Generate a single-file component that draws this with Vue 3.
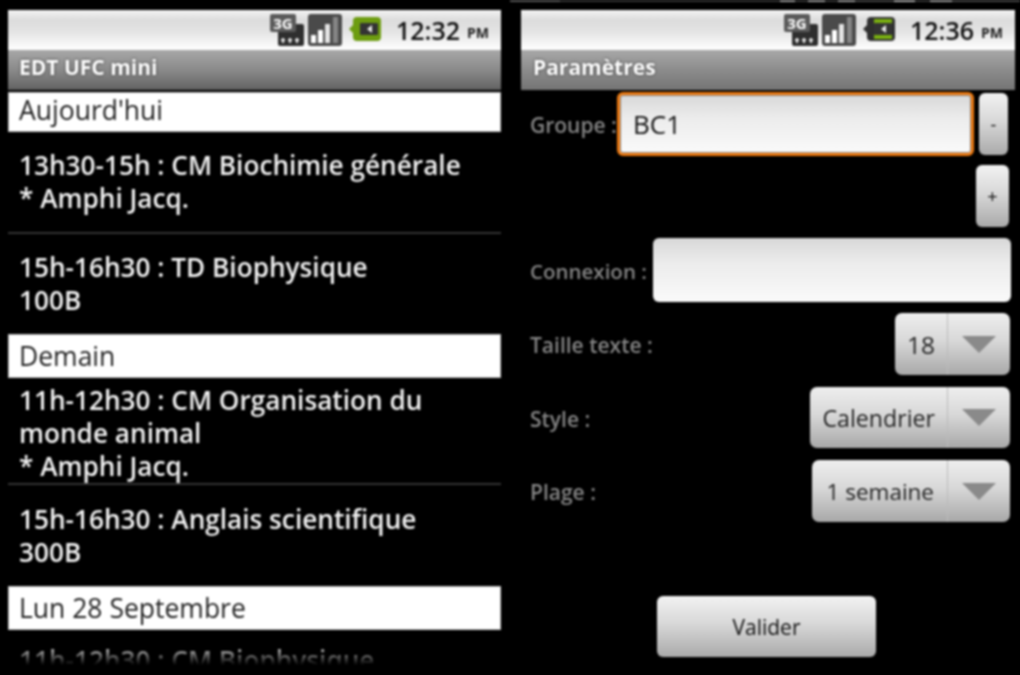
<script setup>
const groups = [
  { day: "Aujourd'hui", cls: 'first', items: [
    { lines: ['13h30-15h : CM Biochimie générale', '* Amphi Jacq.'], cls: 'c1' },
    { lines: ['15h-16h30 : TD Biophysique', '100B'], cls: 'c2' },
  ]},
  { day: 'Demain', cls: 'second', items: [
    { lines: ['11h-12h30 : CM Organisation du', 'monde animal', '* Amphi Jacq.'], cls: 'c3' },
    { lines: ['15h-16h30 : Anglais scientifique', '300B'], cls: 'c4' },
  ]},
  { day: 'Lun 28 Septembre', cls: 'third', items: [
    { lines: ['11h-12h30 : CM Biophysique'], cls: 'c5' },
  ]},
]
const spinners = [
  { label: 'Taille texte :', value: '18', cls: 's1' },
  { label: 'Style :', value: 'Calendrier', cls: 's2' },
  { label: 'Plage :', value: '1 semaine', cls: 's3' },
]
const panels = [
  { time: '12:32', title: 'EDT UFC mini', charging: true },
  { time: '12:36', title: 'Paramètres', charging: false },
]
</script>

<template>
  <main class="page">
    <section v-for="(p, i) in panels" :key="p.time" class="phone" :class="i ? 'right' : 'left'">
      <div v-if="i" class="tear"></div>
      <header class="status">
        <svg class="ic net" viewBox="0 0 34 32">
          <rect x="8" y="10" width="26" height="22" rx="2" fill="#2e2e2e" />
          <rect x="0" y="0" width="26" height="18" rx="2" fill="#5a5a5a" />
          <text x="13" y="15" text-anchor="middle" class="t3g">3G</text>
          <path d="M13 24v5M20 24v5M27 24v5M11 26h4M18 26h4M25 26h4" stroke="#ddd" stroke-width="2" />
        </svg>
        <svg class="ic sig" viewBox="0 0 34 32">
          <rect width="34" height="32" rx="3" fill="#4a4a4a" />
          <rect x="3" y="21" width="5" height="8" fill="#fff" />
          <rect x="10" y="16" width="5" height="13" fill="#fff" />
          <rect x="17" y="10" width="5" height="19" fill="#e4e4e4" />
          <rect x="25" y="3" width="5" height="26" fill="#858585" />
        </svg>
        <svg class="ic bat" viewBox="0 0 32 26">
          <path d="M0 13l4-4V5q0-4 4-4h20q4 0 4 4v16q0 4-4 4H8q-4 0-4-4v-4z" :fill="p.charging ? '#6d9c10' : '#2f2f2f'" />
          <rect v-if="!p.charging" x="11" y="3" width="18" height="20" fill="#7ab010" />
          <rect x="11" y="7" width="18" height="12" rx="1" fill="#333" />
          <path d="M23 9l-5 4 5 4z" fill="#eee" />
        </svg>
        <span class="time">{{ p.time }}</span>
        <span class="pm">PM</span>
      </header>
      <h1 class="title">{{ p.title }}</h1>

      <div v-if="!i" class="list">
        <template v-for="g in groups" :key="g.day">
          <div class="day" :class="g.cls">{{ g.day }}</div>
          <div v-for="it in g.items" :key="it.lines[0]" class="item" :class="it.cls">
            <div v-for="l in it.lines" :key="l">{{ l }}</div>
          </div>
        </template>
      </div>

      <div v-else class="form">
        <div class="row group">
          <label>Groupe :</label>
          <div class="input focus">BC1</div>
          <button class="btn minus">-</button>
        </div>
        <div class="row plus-row"><button class="btn plus">+</button></div>
        <div class="row conn">
          <label>Connexion :</label>
          <div class="input blank"></div>
        </div>
        <div v-for="s in spinners" :key="s.label" class="row spin-row" :class="s.cls">
          <label>{{ s.label }}</label>
          <div class="spinner">
            <span class="val">{{ s.value }}</span>
            <span class="arrow"><i></i></span>
          </div>
        </div>
        <div class="row submit"><button class="btn valider">Valider</button></div>
      </div>
    </section>
  </main>
</template>

<style>
html, body { margin: 0; background: #000; }
</style>

<style scoped>
.page {
  width: 1020px; height: 675px; overflow: hidden; display: flex;
  background: #000; font-family: "Open Sans", "DejaVu Sans", sans-serif;
  filter: blur(0.8px);
}
.phone { display: flex; flex-direction: column; padding-top: 10px; box-sizing: border-box; height: 675px; position: relative; }
.left { width: 493px; margin-left: 8px; }
.right { width: 494px; margin-left: 20px; }
.tear {
  position: absolute; left: -11px; right: -5px; top: 0; height: 2px;
  background: linear-gradient(90deg, #555 0 50px, #333 50px 270px, #999 270px 285px, #333 285px 298px, #999 298px 315px, #333 315px 328px, #999 328px 345px, #444 345px 384px, #aaa 384px 405px, #333 405px 420px, #999 420px 442px, #444 442px);
}
.status {
  height: 40px; flex: none; display: flex; align-items: center; justify-content: flex-end;
  background: linear-gradient(#f4f4f4 0, #dcdcdc 25%, #e4e4e4 55%, #fff 100%);
  padding-right: 12px; box-sizing: border-box;
}
.ic { display: block; flex: none; }
.net { width: 34px; height: 32px; }
.sig { width: 34px; height: 32px; margin-left: 4px; }
.bat { width: 32px; height: 26px; margin-left: 7px; margin-top: -3px; }
.t3g { font: 700 15px "Open Sans", sans-serif; fill: #fff; }
.time { font-size: 25px; font-weight: 600; color: #111; margin-left: 15px; line-height: 40px; }
.pm { font-size: 14px; font-weight: 700; color: #222; margin-left: 7px; margin-top: 5px; }
.title {
  height: 40px; flex: none; margin: 0; box-sizing: border-box; padding-left: 11px;
  background: linear-gradient(#a8a8a8, #8a8a8a 50%, #666 95%, #555);
  color: #fff; font-size: 21px; font-weight: 700; line-height: 35px;
  text-shadow: 0 0 3px #333;
}
.right .title { padding-left: 12px; background: linear-gradient(#a8a8a8, #8c8c8c 50%, #747474); }
.list { flex: none; height: 575px; overflow: hidden; position: relative; margin-top: 2px; }
.day {
  background: #fff; color: #222; font-size: 26.5px; line-height: 37px; height: 40px;
  padding-left: 11px; box-shadow: inset 0 0 0 1px #bbb;
}
.day.second, .day.third { height: 44px; line-height: 45px; }
.item {
  color: #f2f2f2; font-size: 26.2px; font-weight: 600; line-height: 33px; padding-left: 11px;
  white-space: nowrap; box-sizing: border-box;
}
.c1 { height: 102px; padding-top: 17px; border-bottom: 2px solid #333; }
.c2 { height: 100px; padding-top: 17px; }
.c3 { height: 107px; padding-top: 6px; border-bottom: 2px solid #333; }
.c4 { height: 101px; padding-top: 18px; }
.c5 {
  height: 35px; padding-top: 14px; color: #ccc;
  -webkit-mask-image: linear-gradient(#000 45%, transparent 100%);
  mask-image: linear-gradient(#000 45%, transparent 100%);
}
.form { display: flex; flex-direction: column; padding: 2px 4px 0 9px; font-size: 21px; }
.row { display: flex; align-items: center; }
.row label { font-weight: 600; white-space: nowrap; color: #858585; padding-top: 2px; }
.input {
  background: linear-gradient(#d8d8d8, #ececec 40%, #fafafa);
  color: #111; font-size: 26px; border-radius: 6px; box-sizing: border-box;
}
.group { height: 64px; }
.group label { width: 87px; flex: none; }
.focus {
  width: 357px; height: 64px; line-height: 58px; padding-left: 13px; flex: none;
  border: 3px solid #ef7a10; box-shadow: inset 0 0 0 1px #888;
}
.btn {
  border: 0; padding: 0; border-radius: 6px; font-family: inherit; color: #111; font-weight: 400;
  background: linear-gradient(#f2f2f2, #d8d8d8 45%, #aaa); display: block;
}
.minus { width: 29px; height: 62px; margin-left: 5px; font-size: 18px; }
.plus-row { height: 62px; margin-top: 9px; justify-content: flex-end; padding-right: 2px; }
.plus { width: 33px; height: 62px; font-size: 18px; }
.conn { height: 64px; margin-top: 11px; }
.conn label { width: 123px; flex: none; font-size: 20.5px; }
.blank { width: 358px; height: 64px; }
.spin-row { height: 62px; justify-content: space-between; padding-right: 1px; }
.s1 { margin-top: 11px; }
.s2 { margin-top: 12px; height: 61px; }
.s3 { margin-top: 12px; }
.spinner {
  display: flex; height: 100%; border-radius: 7px; overflow: hidden; color: #222; font-size: 23.2px;
  background: linear-gradient(#eee, #d8d8d8 45%, #a8a8a8);
}
.val { display: flex; align-items: center; padding: 0 12px; border-right: 1px solid #bbb; white-space: nowrap; }
.s1 .val { font-size: 24.5px; }
.s3 .val { font-size: 22.5px; padding: 0 13px 0 14px; }
.arrow { width: 62px; display: flex; align-items: center; justify-content: center; }
.arrow i { display: block; width: 0; height: 0; border-left: 17px solid transparent; border-right: 17px solid transparent; border-top: 17px solid #8a8a8a; }
.submit { justify-content: flex-start; margin-top: 74px; padding-left: 127px; }
.valider { width: 219px; height: 61px; font-size: 21px; border-radius: 6px; }
</style>
